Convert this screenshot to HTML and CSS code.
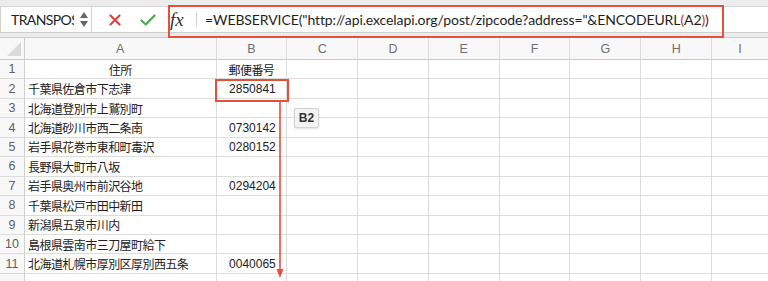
FILE: index.html
```html
<!DOCTYPE html>
<html lang="ja">
<head>
<meta charset="utf-8">
<link rel="stylesheet" href="styles.css">
</head>
<body>
<div class="app">
  <div class="topstrip"></div>
  <div class="formulabar">
    <div class="namebox">
      <div class="namebox-text">TRANSPOSE</div>
      <div class="spinner"><span class="up"></span><span class="down"></span></div>
    </div>
    <div class="buttons">
      <svg class="icon-x" width="12" height="12" viewBox="0 0 12 12"><path d="M1.5 1.5 L10.5 10.5 M10.5 1.5 L1.5 10.5" stroke="#d9473d" stroke-width="2.2" stroke-linecap="round"/></svg>
      <svg class="icon-check" width="16" height="12" viewBox="0 0 16 12"><path d="M1.5 6.5 L5.8 10.5 L14.5 1.5" fill="none" stroke="#4caa4e" stroke-width="2.2" stroke-linecap="round" stroke-linejoin="round"/></svg>
    </div>
    <div class="fx">fx</div>
    <div class="sep"></div>
    <div class="formula">=WEBSERVICE("http://api.excelapi.org/post/zipcode?address="&amp;ENCODEURL<span class="paren">(</span>A2<span class="paren">)</span>)</div>
  </div>
  <div class="gap"></div>
  <div class="sheet">
    <div class="corner"><span class="tri"></span></div>
    <div class="colhead">A</div><div class="colhead">B</div><div class="colhead">C</div><div class="colhead">D</div><div class="colhead">E</div><div class="colhead">F</div><div class="colhead">G</div><div class="colhead">H</div><div class="colhead last">I</div>

    <div class="rowhead">1</div><div class="cell center">住所</div><div class="cell center">郵便番号</div><div class="cell"></div><div class="cell"></div><div class="cell"></div><div class="cell"></div><div class="cell"></div><div class="cell"></div><div class="cell last"></div>
    <div class="rowhead">2</div><div class="cell">千葉県佐倉市下志津</div><div class="cell num">2850841</div><div class="cell"></div><div class="cell"></div><div class="cell"></div><div class="cell"></div><div class="cell"></div><div class="cell"></div><div class="cell last"></div>
    <div class="rowhead">3</div><div class="cell">北海道登別市上鷲別町</div><div class="cell num"></div><div class="cell"></div><div class="cell"></div><div class="cell"></div><div class="cell"></div><div class="cell"></div><div class="cell"></div><div class="cell last"></div>
    <div class="rowhead">4</div><div class="cell">北海道砂川市西二条南</div><div class="cell num">0730142</div><div class="cell"></div><div class="cell"></div><div class="cell"></div><div class="cell"></div><div class="cell"></div><div class="cell"></div><div class="cell last"></div>
    <div class="rowhead">5</div><div class="cell">岩手県花巻市東和町毒沢</div><div class="cell num">0280152</div><div class="cell"></div><div class="cell"></div><div class="cell"></div><div class="cell"></div><div class="cell"></div><div class="cell"></div><div class="cell last"></div>
    <div class="rowhead">6</div><div class="cell">長野県大町市八坂</div><div class="cell num"></div><div class="cell"></div><div class="cell"></div><div class="cell"></div><div class="cell"></div><div class="cell"></div><div class="cell"></div><div class="cell last"></div>
    <div class="rowhead">7</div><div class="cell">岩手県奥州市前沢谷地</div><div class="cell num">0294204</div><div class="cell"></div><div class="cell"></div><div class="cell"></div><div class="cell"></div><div class="cell"></div><div class="cell"></div><div class="cell last"></div>
    <div class="rowhead">8</div><div class="cell">千葉県松戸市田中新田</div><div class="cell num"></div><div class="cell"></div><div class="cell"></div><div class="cell"></div><div class="cell"></div><div class="cell"></div><div class="cell"></div><div class="cell last"></div>
    <div class="rowhead">9</div><div class="cell">新潟県五泉市川内</div><div class="cell num"></div><div class="cell"></div><div class="cell"></div><div class="cell"></div><div class="cell"></div><div class="cell"></div><div class="cell"></div><div class="cell last"></div>
    <div class="rowhead">10</div><div class="cell">島根県雲南市三刀屋町給下</div><div class="cell num"></div><div class="cell"></div><div class="cell"></div><div class="cell"></div><div class="cell"></div><div class="cell"></div><div class="cell"></div><div class="cell last"></div>
    <div class="rowhead">11</div><div class="cell">北海道札幌市厚別区厚別西五条</div><div class="cell num">0040065</div><div class="cell"></div><div class="cell"></div><div class="cell"></div><div class="cell"></div><div class="cell"></div><div class="cell"></div><div class="cell last"></div>
    <div class="rowhead"></div><div class="cell"></div><div class="cell"></div><div class="cell"></div><div class="cell"></div><div class="cell"></div><div class="cell"></div><div class="cell"></div><div class="cell"></div><div class="cell last"></div>
  </div>

  <div class="mark-formula"></div>
  <div class="mark-cell"></div>
  <svg class="mark-arrow" width="12" height="180" viewBox="0 0 12 180"><line x1="6" y1="0" x2="6" y2="170" stroke="#e4513b" stroke-width="1.6"/><polygon points="2.5,168 9.5,168 6,177" fill="#e4513b"/></svg>
  <div class="tooltip">B2</div>
</div>
</body>
</html>
```

FILE: styles.css
```css
* { box-sizing: border-box; }
html, body { margin: 0; padding: 0; background: #ffffff; }
body { width: 768px; height: 281px; overflow: hidden; font-family: "Liberation Sans", Arial, sans-serif; }
.app { position: relative; width: 768px; height: 281px; overflow: hidden; }

.topstrip { height: 7px; background: #ececec; border-bottom: 1px solid #d6d6d6; }

.formulabar { height: 26px; display: flex; align-items: center; background: #ffffff; border-bottom: 1px solid #cfcfcf; }
.namebox { width: 92px; height: 100%; display: flex; align-items: center; border-right: 1px solid #d0d0d0; border-left: 1px solid #d0d0d0; }
.namebox-text { width: 63px; margin-left: 10px; overflow: hidden; white-space: nowrap; font-family: "Lato", "Liberation Sans", sans-serif; font-size: 14px; letter-spacing: -0.6px; color: #222; }
.spinner { margin-left: 6px; display: flex; flex-direction: column; gap: 3px; }
.spinner span { display: block; width: 0; height: 0; border-left: 4px solid transparent; border-right: 4px solid transparent; }
.spinner .up { border-bottom: 6px solid #666; }
.spinner .down { border-top: 6px solid #666; }

.buttons { width: 76px; height: 100%; display: flex; align-items: center; padding-left: 17px; gap: 19px; padding-top: 1px; }
.fx { margin-left: 2px; font-family: "Liberation Serif", "DejaVu Serif", serif; font-style: italic; font-size: 19px; color: #333; width: 22px; }
.sep { width: 1px; height: 15px; background: #cfcfcf; margin-left: 4px; }
.formula { margin-left: 8px; font-family: "Lato", "Liberation Sans", sans-serif; font-size: 14px; color: #1e1e1e; white-space: nowrap; letter-spacing: -0.1px; }
.paren { color: #c8302a; }

.gap { height: 5px; background: #ebebeb; border-bottom: 1px solid #cccccc; }

.sheet { display: grid; grid-template-columns: 25px 191.5px repeat(7, 70.8px) 1fr; grid-template-rows: 22px; grid-auto-rows: 19.45px; }
.corner { background: #f8f8f8; border-right: 1px solid #cfcfcf; border-bottom: 1px solid #c8c8c8; position: relative; }
.tri { position: absolute; right: 3px; bottom: 3px; width: 0; height: 0; border-left: 14px solid transparent; border-bottom: 14px solid #dadada; }
.colhead { background: #f8f8f8; border-right: 1px solid #dcdcdc; border-bottom: 1px solid #c8c8c8; display: flex; align-items: center; justify-content: center; font-family: "Liberation Sans", Arial, sans-serif; font-size: 12.5px; color: #6f6f6f; }
.rowhead { background: #f8f8f8; border-right: 1px solid #cfcfcf; border-bottom: 1px solid #dcdcdc; display: flex; align-items: center; justify-content: center; font-size: 12.5px; color: #5e5e5e; }
.cell { border-right: 1px solid #dcdcdc; border-bottom: 1px solid #dcdcdc; display: flex; align-items: center; padding-left: 3px; font-family: "Noto Sans CJK JP", sans-serif; font-size: 12px; letter-spacing: -0.55px; color: #222; white-space: nowrap; overflow: visible; }
.cell.center { justify-content: center; padding-left: 0; }
.cell.num { justify-content: center; padding-left: 2px; font-family: "Liberation Sans", Arial, sans-serif; font-size: 12px; letter-spacing: 0; }
.last { border-right: none; }

.mark-formula { position: absolute; left: 168px; top: 5px; width: 556px; height: 33px; border: 2px solid #e4513b; }
.mark-cell { position: absolute; left: 215px; top: 79px; width: 74px; height: 23px; border: 2px solid #e4513b; }
.mark-arrow { position: absolute; left: 273.5px; top: 101px; }
.tooltip { position: absolute; left: 294px; top: 108px; width: 25px; height: 20px; background: #f3f3f3; border: 1px solid #d2d2d2; border-radius: 2px; box-shadow: 0 1px 2px rgba(0,0,0,0.12); display: flex; align-items: center; justify-content: center; font-size: 12px; font-weight: bold; color: #333; }
```
